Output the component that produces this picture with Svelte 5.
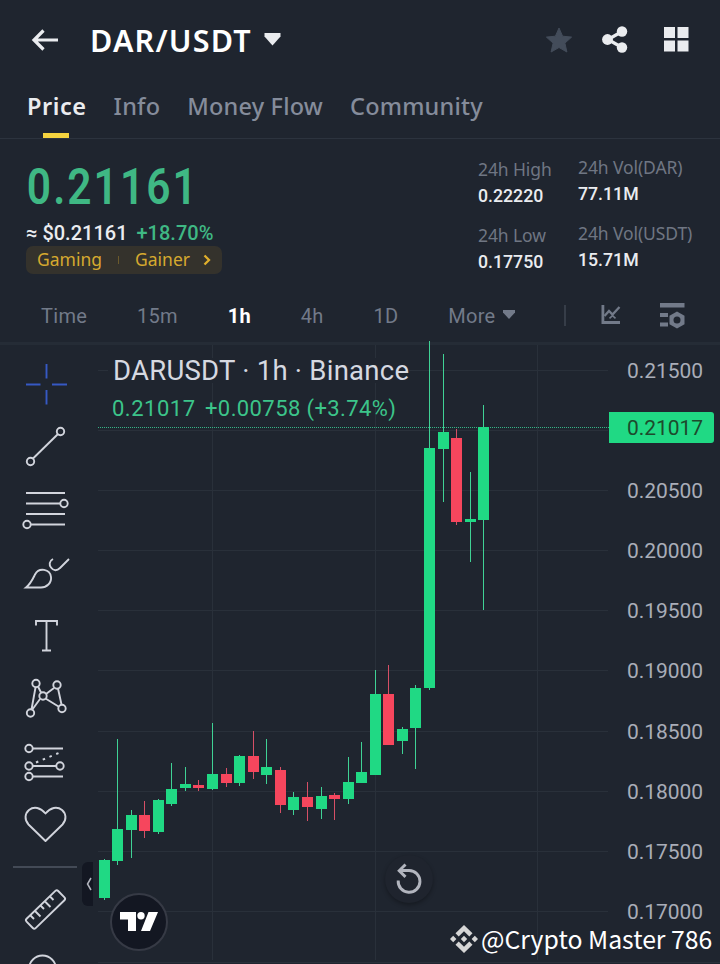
<script>
    const tabs = ['Price', 'Info', 'Money Flow', 'Community'];
    const intervals = ['Time', '15m', '1h', '4h', '1D'];
    let activeTab = $state('Price');
    let activeInterval = $state('1h');

    // price axis: label and y position
    const levels = [
        ['0.21500', 370],
        ['', 430],
        ['0.20500', 490],
        ['0.20000', 550],
        ['0.19500', 610],
        ['0.19000', 670],
        ['0.18500', 731],
        ['0.18000', 791],
        ['0.17500', 851],
        ['0.17000', 911],
    ];

    // left, high, body top, body bottom, low, up
    const candles = [
        [99, 859, 860, 898, 900, 1],
        [112, 739, 829, 861, 865, 1],
        [126, 810, 815, 830, 858, 1],
        [139, 801, 815, 831, 838, 0],
        [153, 799, 800, 832, 834, 1],
        [166, 763, 789, 804, 806, 1],
        [180, 767, 784, 788, 791, 1],
        [193, 780, 785, 788, 791, 0],
        [207, 723, 774, 789, 790, 1],
        [221, 768, 774, 783, 787, 0],
        [234, 755, 756, 783, 786, 1],
        [248, 731, 756, 772, 779, 0],
        [261, 739, 767, 775, 784, 1],
        [275, 767, 770, 805, 813, 0],
        [288, 792, 797, 810, 815, 1],
        [302, 782, 797, 807, 821, 0],
        [316, 787, 796, 809, 819, 1],
        [329, 793, 795, 799, 820, 0],
        [343, 757, 782, 799, 804, 1],
        [356, 742, 772, 783, 783, 1],
        [370, 670, 694, 775, 775, 1],
        [383, 665, 694, 745, 745, 0],
        [397, 727, 729, 741, 754, 1],
        [410, 685, 688, 728, 769, 1],
        [424, 341, 448, 688, 690, 1],
        [438, 354, 432, 449, 502, 1],
        [451, 429, 438, 522, 525, 0],
        [465, 472, 519, 522, 562, 1],
        [478, 405, 427, 520, 610, 1],
    ];
</script>

<main>
    <header>
        <svg class="back" width="28" height="22" viewBox="0 0 28 22">
            <path d="M12.500 1.500L3 11l9.500 9.500M3.500 11H27" fill="none" stroke="#eaecef" stroke-width="3.200" />
        </svg>
        <h1>DAR/USDT</h1>
        <svg class="caret" width="17" height="13" viewBox="0 0 17 13">
            <path d="M.5 0h16v3.500L8.500 12.500.5 3.500z" fill="#eaecef" />
        </svg>
        <svg class="star" width="28" height="28" viewBox="0 0 28 28">
            <path d="M14 2l3.600 8.200 9 .9-6.700 6 2 8.900L14 21.500 6.100 26l2-8.900-6.700-6 9-.9z" fill="#434c5a" stroke="#434c5a" stroke-linejoin="round" />
        </svg>
        <svg class="share" width="28" height="28" viewBox="0 0 28 28">
            <path d="M21 5.500L7 13.500l14 8" fill="none" stroke="#eaecef" stroke-width="3.200" />
            <g fill="#eaecef">
                <circle cx="21" cy="5.500" r="5.200" />
                <circle cx="6.500" cy="13.500" r="5.400" />
                <circle cx="21" cy="21.500" r="5.200" />
            </g>
        </svg>
        <svg class="grid" width="25" height="25" viewBox="0 0 25 25">
            <path d="M0 0h11v11H0zM13.500 0h11v11h-11zM0 13.500h11v11H0zM13.500 13.500h11v11h-11z" fill="#eaecef" />
        </svg>
    </header>

    <nav class="tabs">
        {#each tabs as tab}
            <button class:active={tab === activeTab} onclick={() => (activeTab = tab)}>{tab}</button>
        {/each}
    </nav>

    <section class="summary">
        <div class="price">
            <div class="last">0.21161</div>
            <div class="fiat"><span>≈ $0.21161</span><span class="change">+18.70%</span></div>
            <div class="tags">
                <span>Gaming</span><i></i><span>Gainer</span>
                <svg width="8" height="12" viewBox="0 0 8 12">
                    <path d="M1.500 1.500L6 6l-4.500 4.500" fill="none" stroke="#dfae2c" stroke-width="2.300" />
                </svg>
            </div>
        </div>
        <dl class="range">
            <dt>24h High</dt>
            <dd>0.22220</dd>
            <dt>24h Low</dt>
            <dd>0.17750</dd>
        </dl>
        <dl class="volume">
            <dt>24h Vol(DAR)</dt>
            <dd>77.11M</dd>
            <dt>24h Vol(USDT)</dt>
            <dd>15.71M</dd>
        </dl>
    </section>

    <nav class="intervals">
        {#each intervals as item}
            <button class:active={item === activeInterval} onclick={() => (activeInterval = item)}>{item}</button>
        {/each}
        <button class="more">More
            <svg width="12" height="9" viewBox="0 0 12 9"><path d="M0 0h12v2.500L6 9 0 2.500z" fill="#727a89" /></svg>
        </button>
        <span class="divider"></span>
        <svg class="indicator" width="20" height="20" viewBox="0 0 20 20">
            <g fill="none" stroke="#727a89" stroke-width="2.800">
                <path d="M1.900 0v17.500H19" />
                <path d="M3.500 11l4.500-5 3.500 3.500 7-7.500" stroke-width="2.300" />
                <path d="M8.500 13.300l3-2.700 3 2.700" stroke-width="1.600" />
            </g>
        </svg>
        <svg class="settings" width="25" height="26" viewBox="0 0 25 26">
            <path d="M0 0h24.500v4.500H0zM0 10h8v4H0zM0 19.500h8v4H0z" fill="#727a89" />
            <path d="M17 8.500l7.500 4.200v8.600L17 25.500l-7.500-4.200v-8.600z" fill="#727a89" />
            <circle cx="17" cy="17" r="3.500" fill="#1f252f" />
        </svg>
    </nav>

    <div class="workspace">
        <aside>
            <svg width="98" height="621" viewBox="0 343 98 621" fill="none" stroke="#d1d4dc" stroke-width="1.900">
                <!-- crosshair -->
                <path d="M46.500 364v14.500M46.500 390v14.500M26 384.500h14.500M52 384.500h15" stroke="#3659c4" stroke-width="1.900" />
                <!-- trend line -->
                <path d="M33 458.500l25-24.500" />
                <circle cx="60.500" cy="431.500" r="3.700" />
                <circle cx="30.500" cy="461.500" r="3.700" />
                <!-- fib retracement -->
                <path d="M26 493h39M26 503.500h34M26 514h39M31 524.500h34" />
                <circle cx="64" cy="503.500" r="3.700" />
                <circle cx="27" cy="524.500" r="3.700" />
                <!-- brush -->
                <path d="M26 587.500c5-4 7-9 9-13 4-7.500 15-5.500 16 2.500.8 6-4.500 10.500-10 10.500zM53 559c-4 2-4 6-2 8.500 2.500 3.500 6 3.500 9 .5l9-9" />
                <!-- text -->
                <path d="M36 625.500v-4.500h21v4.500M46.500 621v29.500M42 650.500h9" />
                <!-- pattern -->
                <path d="M35.500 687.500l-4 22M38 686.500l3 6M46 694l8-6M58 688.500l3.500 16M45.500 698.500l13 8M40 699l-8 11" />
                <circle cx="36" cy="683.500" r="3.700" />
                <circle cx="57" cy="685" r="3.700" />
                <circle cx="43" cy="696" r="3.700" />
                <circle cx="30.500" cy="713" r="3.700" />
                <circle cx="62" cy="708.500" r="3.700" />
                <!-- position -->
                <path d="M33 748.500h30M33 766h23M33 776.500h30" />
                <path d="M36 762.500l25-10.500" stroke-dasharray="2.500 4.800" stroke-width="2" />
                <circle cx="29" cy="748.500" r="3.700" />
                <circle cx="29" cy="766" r="3.700" />
                <circle cx="60" cy="766" r="3.700" />
                <circle cx="29" cy="776.500" r="3.700" />
                <!-- heart -->
                <path d="M45.500 841L28.500 824.500c-4.500-5-3.500-11 .5-14.500 5-4 11.500-2.500 16.500 3.500 5-6 11.500-7.500 16.500-3.500 4 3.500 5 9.500.5 14.500z" stroke-linejoin="round" />
                <path d="M13 867h64" stroke="#434a56" stroke-width="2" />
                <!-- ruler -->
                <rect x="-22" y="-6.500" width="44" height="13" rx="2" transform="translate(45.500 909.500) rotate(-44)" />
                <path d="M30.500 915.500l3.500 3.500M35 911l5.500 5.500M40.500 905.500l3.500 3.500M45 901.500l5.500 5.500M50 896.500l3.500 3.500" />
                <circle cx="42.500" cy="969" r="13.500" />
            </svg>
        </aside>

        <div class="chart">
            <svg width="622" height="623" viewBox="98 341 622 623">
                <g fill="#29303a">
                    {#each levels as [label, y]}
                        <rect x="98" {y} width="510" height="1" />
                    {/each}
                    <rect x="212" y="345" width="1" height="615" />
                    <rect x="375" y="345" width="1" height="615" />
                    <rect x="537" y="345" width="1" height="615" />
                    <rect x="98" y="962" width="622" height="1" />
                </g>
                <path d="M98 427.500h511" stroke="#35b586" stroke-dasharray="1 1" />
                <rect x="108" y="358" width="301" height="25" fill="#1f252f" />

                {#each candles as [x, high, top, bottom, low, up]}
                    <rect x={x + 5} y={high} width="1" height={low - high} fill={up ? '#3fd295' : '#d64f66'} />
                    <rect {x} y={top} width="11" height={bottom - top} fill={up ? '#20d984' : '#f6465d'} />
                {/each}

                <text class="symbol" x="113" y="380" textLength="296">DARUSDT · 1h · Binance</text>
                <text class="ohlc" x="112" y="416" textLength="83">0.21017</text>
                <text class="ohlc" x="205" y="416" textLength="191">+0.00758 (+3.74%)</text>

                {#each levels as [label, y]}
                    <text class="axis" x="627" y={y + 7.5} textLength="76">{label}</text>
                {/each}
                <path d="M609 412h102a3 3 0 0 1 3 3v25a3 3 0 0 1-3 3H609z" fill="#20d984" />
                <text class="axis current" x="627" y="435" textLength="76">0.21017</text>
            </svg>

            <button class="collapse" aria-label="Hide toolbar">
                <svg width="6" height="14" viewBox="0 0 6 14"><path d="M5 1L1.500 7 5 13" fill="none" stroke="#b2b5be" stroke-width="1.500" /></svg>
            </button>
            <div class="tv">
                <svg width="38" height="20" viewBox="0 0 38 20" fill="#fff">
                    <path d="M0 0h16v19H8V7.500H0zM28.500 0H38l-8 19h-9z" />
                    <circle cx="21" cy="3.700" r="3.700" />
                </svg>
            </div>
            <button class="reset" aria-label="Reset chart">
                <svg width="28" height="32" viewBox="0 0 28 32" fill="none" stroke="#b2b5be" stroke-width="2.900">
                    <path d="M3.200 17.500A10.900 10.900 0 1 0 14 7.500H4.500" />
                    <path d="M10.500 1.500L4.200 7.700l6.300 6.200" />
                </svg>
            </button>
            <div class="watermark">
                <svg width="28" height="28" viewBox="0 0 28 28" fill="#d6d6d6">
                    <path d="M14 0l8.500 8.300-3.200 3.200L14 6.300l-5.300 5.200-3.200-3.200zM14 28l8.500-8.300-3.200-3.200-5.300 5.200-5.300-5.200-3.200 3.200zM3.200 10.800L6.400 14l-3.200 3.200L0 14zM24.800 10.800L28 14l-3.200 3.200-3.200-3.200zM14 10.800l3.200 3.200-3.200 3.200-3.200-3.200z" />
                </svg>
                <span>@Crypto Master 786</span>
            </div>
        </div>
    </div>
</main>

<style>
:global(body) {
    margin: 0;
    background: #1f252f;
}

main {
    width: 720px;
    height: 964px;
    overflow: hidden;
    background: #1f252f;
    color: #eaecef;
    font-family: Roboto, "Liberation Sans", sans-serif;
}

svg {
    display: block;
    flex: none;
}

button {
    padding: 0;
    border: none;
    background: none;
    color: inherit;
    font: inherit;
    letter-spacing: inherit;
    cursor: pointer;
}

header {
    box-sizing: border-box;
    display: flex;
    align-items: center;
    height: 80px;
    padding: 0 31px 1px;
}

h1 {
    margin: 1px 0 0 31px;
    width: 164px;
    color: #fff;
    font-family: "Noto Sans", sans-serif;
    font-size: 30.500px;
    font-weight: 600;
    line-height: 40px;
    letter-spacing: 1.200px;
    white-space: nowrap;
}

.caret {
    margin-left: 10px;
}

.star {
    margin-left: auto;
}

.share {
    margin-left: 28px;
}

.grid {
    margin-left: 35px;
}

.tabs {
    display: flex;
    gap: 27px;
    height: 58px;
    padding-left: 27px;
    border-bottom: 1px solid #2c333e;
    color: #858c9b;
    font-family: "Noto Sans", sans-serif;
    font-size: 23.500px;
    font-weight: 500;
    letter-spacing: 0.200px;
}

.tabs button {
    position: relative;
    height: 58px;
    padding-bottom: 6px;
    white-space: nowrap;
}

.tabs .active {
    color: #eaecef;
    font-weight: 600;
    letter-spacing: 0.550px;
}

.tabs .active::after {
    content: "";
    position: absolute;
    left: 50%;
    bottom: 0;
    width: 26px;
    height: 5px;
    margin-left: -13.500px;
    background: #f5d33f;
}

.summary {
    display: flex;
    height: 151px;
}

.price {
    width: 452px;
    padding-left: 26px;
}

.last {
    height: 81px;
    padding-left: 1px;
    color: #3fb884;
    font-size: 50px;
    font-weight: 600;
    line-height: 97px;
    letter-spacing: 2.400px;
    transform: scaleX(0.850);
    transform-origin: left;
}

.fiat {
    display: flex;
    gap: 9px;
    font-size: 20px;
    font-weight: 500;
    line-height: 26px;
}

.fiat .change {
    color: #3fb884;
}

.tags {
    display: flex;
    align-items: center;
    width: 185px;
    height: 28px;
    padding-left: 11px;
    border-radius: 7px;
    background: #34322c;
    color: #d6a92f;
    font-family: "Noto Sans", sans-serif;
    font-size: 17.500px;
    line-height: 26px;
}

.tags span {
    margin-top: -2px;
}

.tags i {
    width: 1px;
    height: 8px;
    margin: 0 16px;
    background: #6b5a2c;
}

.tags svg {
    margin-left: 13px;
}

dl {
    margin: 0;
    padding-top: 17px;
    width: 100px;
    font-size: 18px;
    white-space: nowrap;
}

.volume {
    padding-top: 15px;
    width: 140px;
}

dt {
    color: #6f7683;
    font-family: "Noto Sans", sans-serif;
    font-size: 17.500px;
    line-height: 26px;
    letter-spacing: -0.100px;
}

dd {
    margin: 0 0 13px;
    padding-top: 1px;
    color: #eaecef;
    font-size: 17.700px;
    font-weight: 500;
    line-height: 26px;
}

.intervals {
    display: flex;
    align-items: center;
    height: 47px;
    padding: 2px 0 3px 41px;
    border-bottom: 3px solid #252c36;
    color: #727a89;
    font-size: 20px;
    letter-spacing: 0.300px;
}

.intervals button {
    margin-right: 49.800px;
}

.intervals .active {
    color: #fff;
    font-weight: 700;
}

.intervals .more {
    display: flex;
    align-items: center;
    gap: 8px;
    margin-right: 49px;
}

.more svg {
    margin-top: -3px;
}

.divider {
    width: 2px;
    height: 21px;
    background: #363d48;
}

.indicator {
    margin-left: 35px;
    margin-top: -2px;
}

.settings {
    margin-left: 39px;
}

/* the chart slides under the interval bar so tall wicks can cross its border */
.workspace {
    display: flex;
    height: 621px;
    margin-top: -2px;
}

aside {
    width: 98px;
}

.chart {
    position: relative;
    width: 622px;
    margin-top: -2px;
}

.symbol {
    fill: #d6d9e1;
    font-size: 27.500px;
}

.ohlc {
    fill: #3cc48a;
    font-size: 22px;
}

.axis {
    fill: #a9adb8;
    font-size: 21px;
}

.current {
    fill: #1d4a2c;
}

/* controls lying over the chart */
.collapse {
    position: absolute;
    left: -16px;
    top: 521px;
    display: flex;
    align-items: center;
    width: 11px;
    height: 44px;
    padding-left: 4px;
    border-radius: 6px 0 0 6px;
    background: #131722;
}

.tv {
    position: absolute;
    left: 12px;
    top: 552px;
    display: flex;
    align-items: center;
    justify-content: center;
    width: 54px;
    height: 54px;
    border: 2px solid #363a45;
    border-radius: 50%;
    background: #131722;
}

.reset {
    position: absolute;
    left: 287px;
    top: 514px;
    display: flex;
    align-items: center;
    justify-content: center;
    width: 48px;
    height: 48px;
    border-radius: 50%;
    background: #1f242e;
    box-shadow: 0 2px 4px rgba(0, 0, 0, 0.300);
}

.watermark {
    position: absolute;
    left: 352px;
    top: 584px;
    display: flex;
    align-items: center;
    gap: 3px;
    color: #fff;
    font-family: "Noto Sans CJK SC", sans-serif;
    font-size: 24.800px;
    line-height: 30px;
    white-space: nowrap;
}

.watermark span {
    margin-top: -3px;
}
</style>
